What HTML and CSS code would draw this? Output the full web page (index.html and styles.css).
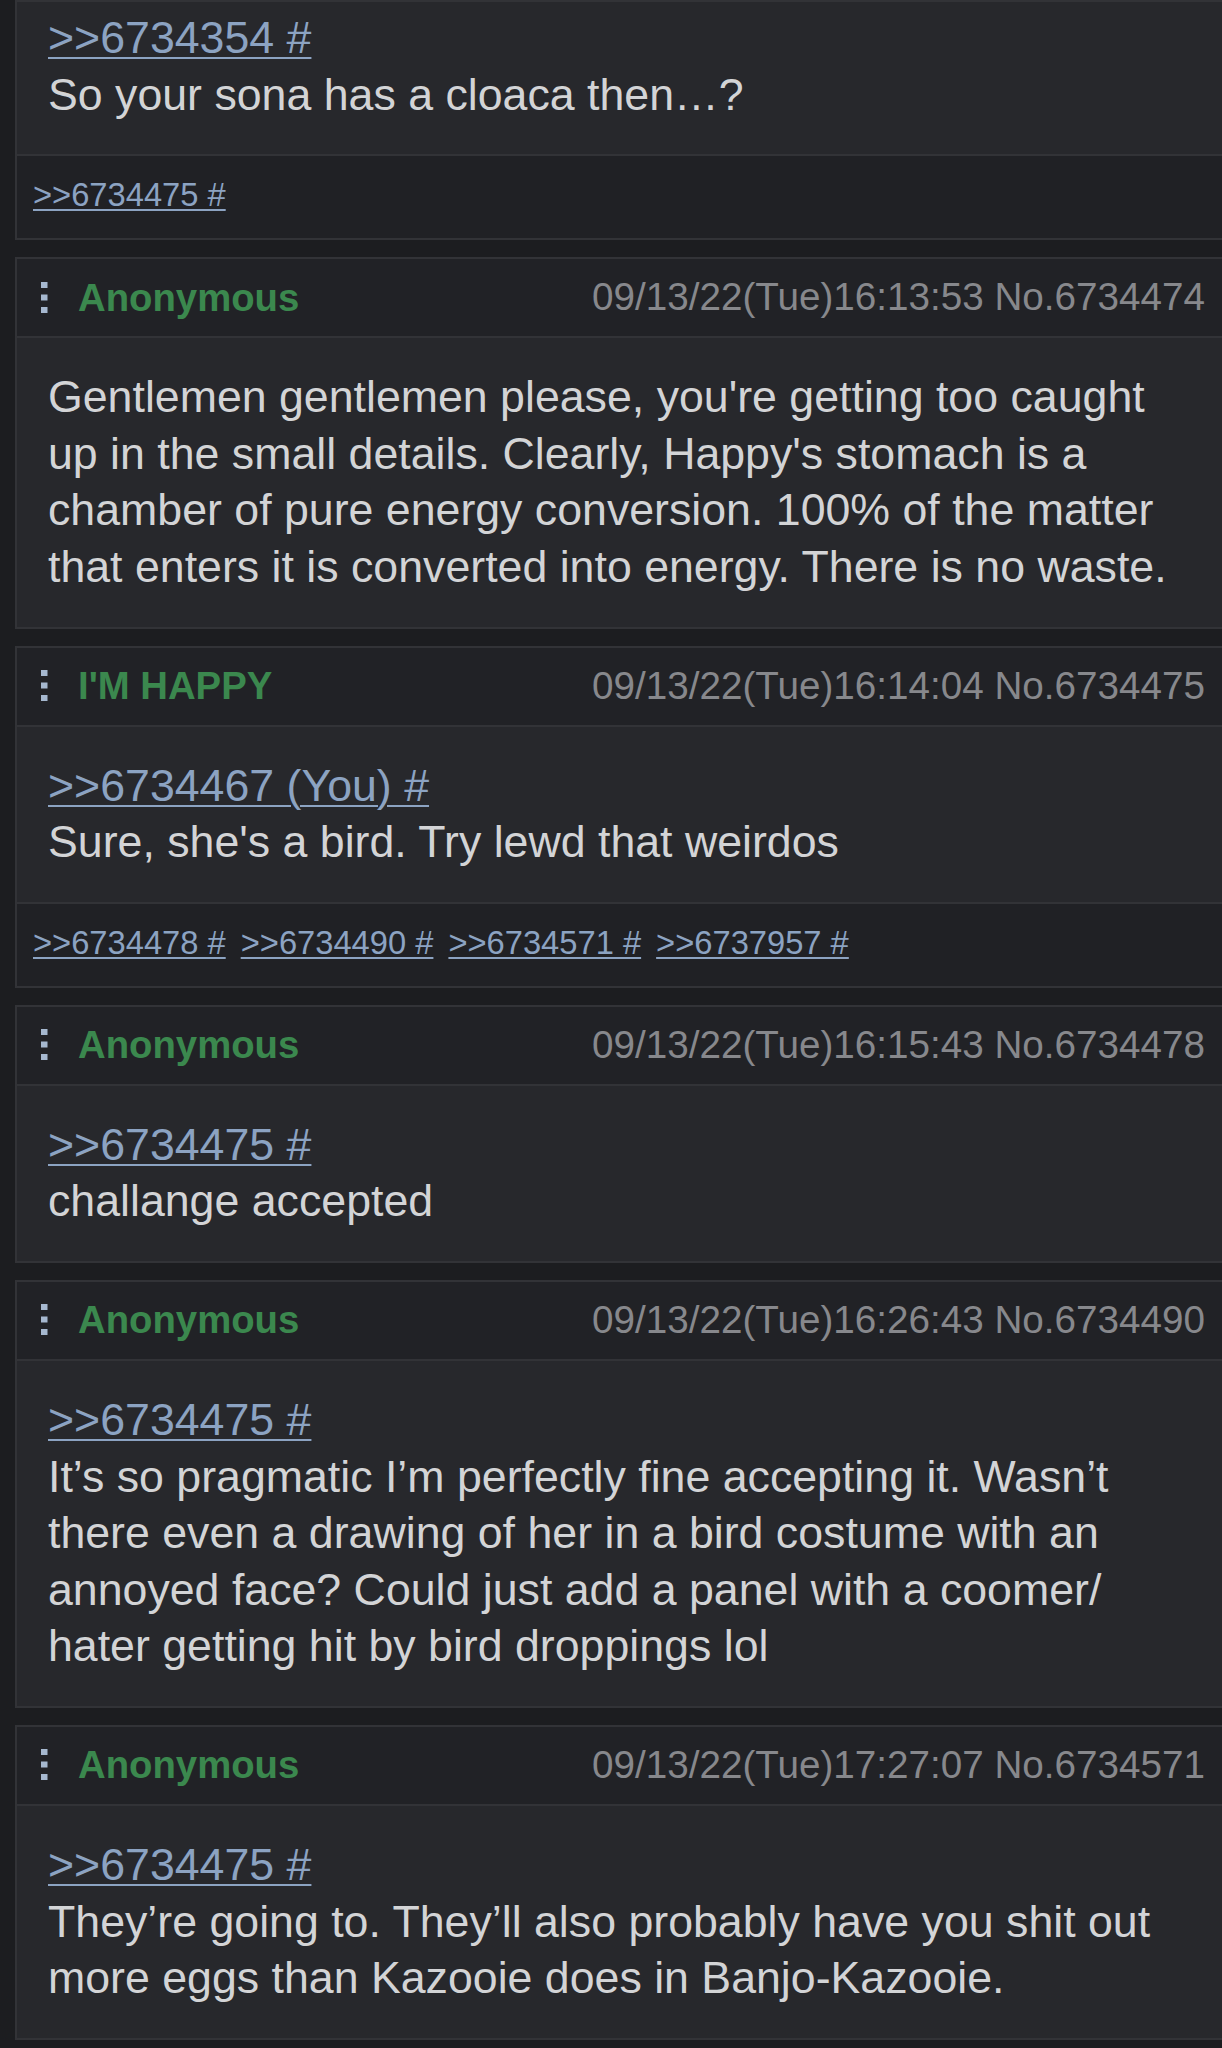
FILE: index.html
```html
<!DOCTYPE html>
<html lang="en">
<head>
<meta charset="utf-8">
<title>Thread</title>
<link rel="stylesheet" href="styles.css">
</head>
<body>
<div class="thread">

  <article class="post post--cut">
    <div class="post-body"><a class="quote" href="#p6734354">&gt;&gt;6734354 #</a><br>So your sona has a cloaca then…?</div>
    <div class="backlinks"><a href="#p6734475">&gt;&gt;6734475 #</a></div>
  </article>

  <article class="post">
    <header class="post-head">
      <span class="menu"><svg width="7" height="32" viewBox="0 0 7 32"><rect x="0" y="0" width="6.5" height="6" fill="#a6b8cf"/><rect x="0" y="12.5" width="6.5" height="6" fill="#a6b8cf"/><rect x="0" y="25" width="6.5" height="6" fill="#a6b8cf"/></svg></span>
      <span class="name">Anonymous</span>
      <span class="date">09/13/22(Tue)16:13:53 No.6734474</span>
    </header>
    <div class="post-body">Gentlemen gentlemen please, you're getting too caught up in the small details. Clearly, Happy's stomach is a chamber of pure energy conversion. 100% of the matter that enters it is converted into energy. There is no waste.</div>
  </article>

  <article class="post">
    <header class="post-head">
      <span class="menu"><svg width="7" height="32" viewBox="0 0 7 32"><rect x="0" y="0" width="6.5" height="6" fill="#a6b8cf"/><rect x="0" y="12.5" width="6.5" height="6" fill="#a6b8cf"/><rect x="0" y="25" width="6.5" height="6" fill="#a6b8cf"/></svg></span>
      <span class="name">I'M HAPPY</span>
      <span class="date">09/13/22(Tue)16:14:04 No.6734475</span>
    </header>
    <div class="post-body"><a class="quote" href="#p6734467">&gt;&gt;6734467 (You) #</a><br>Sure, she's a bird. Try lewd that weirdos</div>
    <div class="backlinks"><a href="#p6734478">&gt;&gt;6734478 #</a><a href="#p6734490">&gt;&gt;6734490 #</a><a href="#p6734571">&gt;&gt;6734571 #</a><a href="#p6737957">&gt;&gt;6737957 #</a></div>
  </article>

  <article class="post">
    <header class="post-head">
      <span class="menu"><svg width="7" height="32" viewBox="0 0 7 32"><rect x="0" y="0" width="6.5" height="6" fill="#a6b8cf"/><rect x="0" y="12.5" width="6.5" height="6" fill="#a6b8cf"/><rect x="0" y="25" width="6.5" height="6" fill="#a6b8cf"/></svg></span>
      <span class="name">Anonymous</span>
      <span class="date">09/13/22(Tue)16:15:43 No.6734478</span>
    </header>
    <div class="post-body"><a class="quote" href="#p6734475">&gt;&gt;6734475 #</a><br>challange accepted</div>
  </article>

  <article class="post">
    <header class="post-head">
      <span class="menu"><svg width="7" height="32" viewBox="0 0 7 32"><rect x="0" y="0" width="6.5" height="6" fill="#a6b8cf"/><rect x="0" y="12.5" width="6.5" height="6" fill="#a6b8cf"/><rect x="0" y="25" width="6.5" height="6" fill="#a6b8cf"/></svg></span>
      <span class="name">Anonymous</span>
      <span class="date">09/13/22(Tue)16:26:43 No.6734490</span>
    </header>
    <div class="post-body"><a class="quote" href="#p6734475">&gt;&gt;6734475 #</a><br>It’s so pragmatic I’m perfectly fine accepting it. Wasn’t there even a drawing of her in a bird costume with an annoyed face? Could just add a panel with a coomer/<wbr>hater getting hit by bird droppings lol</div>
  </article>

  <article class="post">
    <header class="post-head">
      <span class="menu"><svg width="7" height="32" viewBox="0 0 7 32"><rect x="0" y="0" width="6.5" height="6" fill="#a6b8cf"/><rect x="0" y="12.5" width="6.5" height="6" fill="#a6b8cf"/><rect x="0" y="25" width="6.5" height="6" fill="#a6b8cf"/></svg></span>
      <span class="name">Anonymous</span>
      <span class="date">09/13/22(Tue)17:27:07 No.6734571</span>
    </header>
    <div class="post-body"><a class="quote" href="#p6734475">&gt;&gt;6734475 #</a><br>They’re going to. They’ll also probably have you shit out more eggs than Kazooie does in Banjo-Kazooie.</div>
  </article>

</div>
</body>
</html>
```

FILE: styles.css
```css
html, body {
  margin: 0;
  padding: 0;
  background: #1c1d20;
}

body {
  font-family: "Liberation Sans", Arial, sans-serif;
  color: #d3d4d6;
  overflow-x: hidden;
}

.thread {
  display: flex;
  flex-direction: column;
  gap: 17px;
  padding: 0 0 20px 15px;
}

.post {
  background: #27282c;
  border: 2px solid #323337;
  border-right: none;
}

.post-head {
  display: flex;
  align-items: center;
  height: 77px;
  padding: 0 17px 0 24px;
  background: #212226;
  border-bottom: 2px solid #323337;
}

.menu {
  display: flex;
  width: 7px;
  margin-right: 30px;
}

.menu svg {
  display: block;
}

.name {
  color: #3b884e;
  font-weight: bold;
  font-size: 38.3px;
  line-height: 1;
}

.date {
  margin-left: auto;
  color: #87888c;
  font-size: 38.65px;
  line-height: 1;
}

.post-body {
  padding: 31px 33px 31px 31px;
  font-size: 44.7px;
  line-height: 56.6px;
}

.post--cut .post-body {
  padding-top: 8px;
}

a {
  color: #8ca3c2;
  text-decoration: underline;
  text-decoration-thickness: 2px;
  text-underline-offset: 4px;
}

.backlinks {
  display: flex;
  gap: 15px;
  padding: 19px 18px 23px 16px;
  background: #202125;
  border-top: 2px solid #323337;
  font-size: 32.7px;
  line-height: 40px;
}

.backlinks a {
  text-underline-offset: 3px;
}
```
